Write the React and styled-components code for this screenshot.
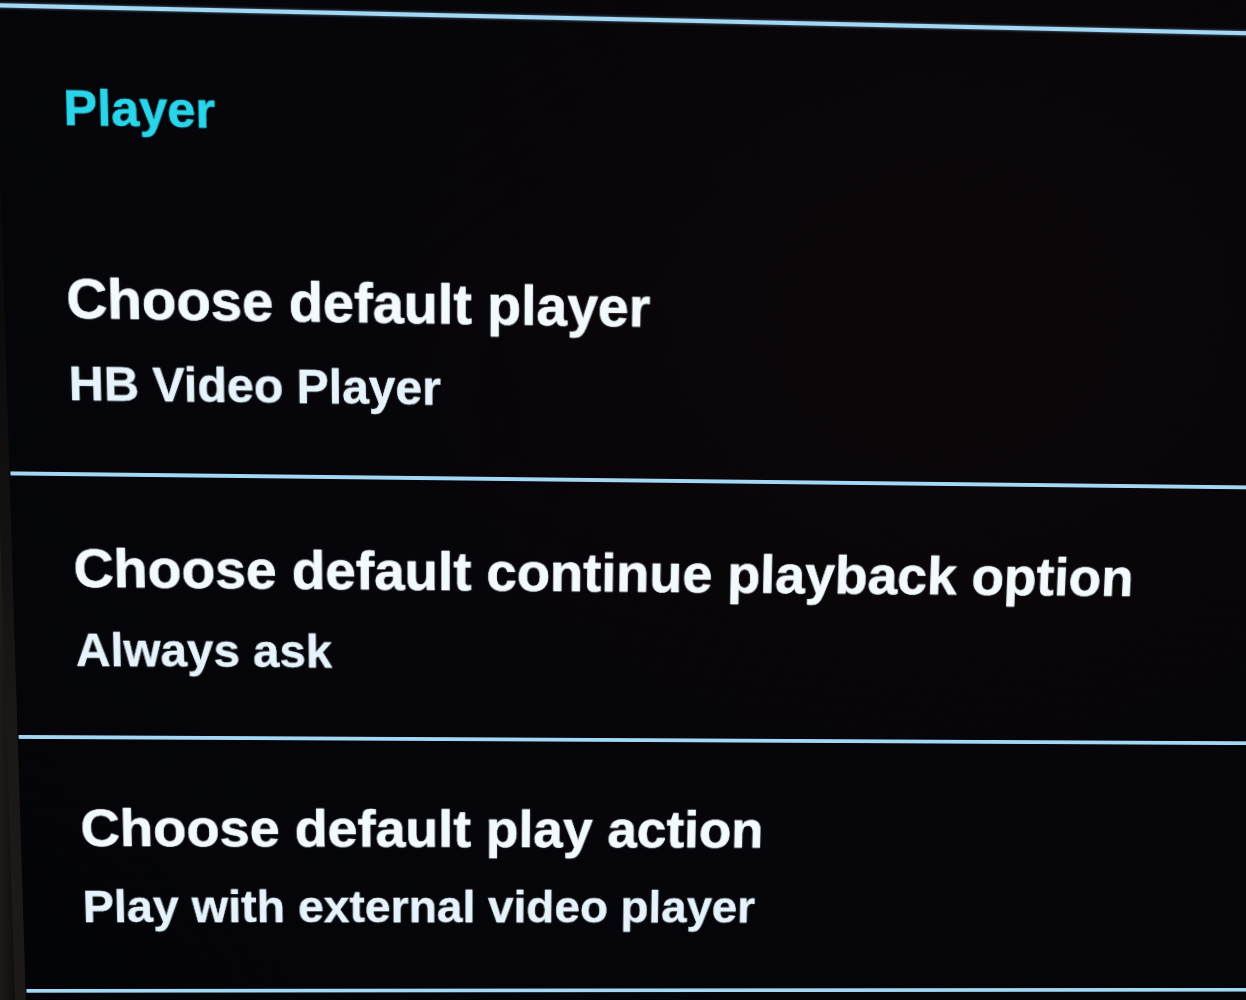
import styled, { createGlobalStyle } from 'styled-components';

const GlobalStyle = createGlobalStyle`
    html, body {
        margin: 0;
        padding: 0;
        background: #151312;
        overflow: hidden;
    }
    body {
        font-family: "Liberation Sans", Arial, sans-serif;
    }
`;

const settings = [
    { title: 'Choose default player', value: 'HB Video Player' },
    { title: 'Choose default continue playback option', value: 'Always ask' },
    { title: 'Choose default play action', value: 'Play with external video player' },
];

function App() {
    return (
        <>
            <GlobalStyle />
            <Frame>
                <Screen>
                    <TopRule />
                    <SectionHeader>Player</SectionHeader>
                    <List>
                        {settings.map((item) => (
                            <Row key={item.title}>
                                <Title>{item.title}</Title>
                                <Value>{item.value}</Value>
                            </Row>
                        ))}
                    </List>
                </Screen>
            </Frame>
        </>
    );
}

export default App;

const Frame = styled.div`
    width: 1246px;
    height: 1000px;
    overflow: hidden;
    background: linear-gradient(90deg, #1d1a18 0px, #100f0f 14px, #050508 30px);
`;

// the panel is seen slightly from the left and from above
const Screen = styled.div`
    display: flex;
    flex-direction: column;
    width: 1320px;
    height: 1120px;
    margin-top: -30px;
    padding-top: 50px;
    box-sizing: border-box;
    background:
        linear-gradient(180deg, #050508 0%, #0d0c0c 35%, #1b1816 70%, #1d1a18 100%) left top / 11px 100% no-repeat,
        radial-gradient(ellipse at 72% 30%, #0d0608 0%, #05050a 50%, #030408 100%);
    transform-origin: 250px 520px;
    transform: perspective(2000px) rotateX(-8deg) rotateY(2.6deg) skewY(1deg) skewX(0.8deg);
`;

const TopRule = styled.div`
    height: 4px;
    background: #a3d8f4;
    box-shadow: 0 0 3px rgba(150, 210, 245, 0.6);
`;

const SectionHeader = styled.h2`
    margin: 0;
    padding: 69px 0 0 74px;
    height: 185px;
    box-sizing: border-box;
    font-size: 49px;
    font-weight: 700;
    color: #2ad5ea;
    line-height: 1;
    -webkit-text-stroke: 0.5px #2ad5ea;
    text-shadow: 0 0 2px rgba(42, 213, 234, 0.5);
`;

const List = styled.div`
    display: flex;
    flex-direction: column;
    padding-left: 12px;
`;

const Row = styled.div`
    display: flex;
    flex-direction: column;
    height: 269px;
    padding: 66px 0 0 60px;
    border-bottom: 4px solid #a3d8f4;
    box-sizing: border-box;
    gap: 31px;
`;

const Title = styled.div`
    font-size: 55.5px;
    font-weight: 700;
    color: #f3fafd;
    line-height: 1;
    -webkit-text-stroke: 0.6px #f3fafd;
    text-shadow: 0 0 2px rgba(230, 245, 255, 0.45);
`;

const Value = styled.div`
    font-size: 48px;
    font-weight: 700;
    color: #e6f3fb;
    line-height: 1;
    -webkit-text-stroke: 0.3px #e6f3fb;
    text-shadow: 0 0 2px rgba(230, 245, 255, 0.4);
`;
